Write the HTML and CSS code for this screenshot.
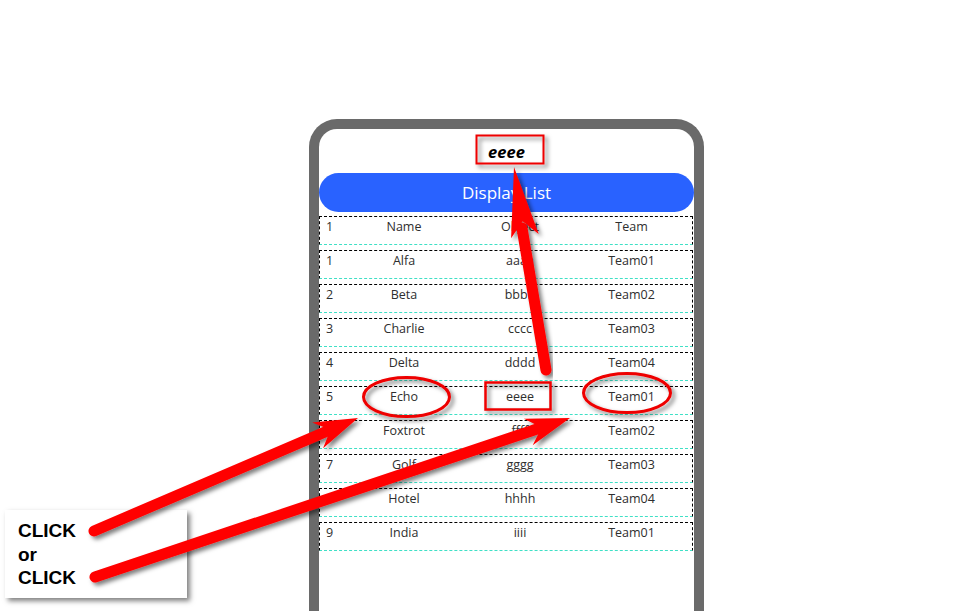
FILE: index.html
```html
<!DOCTYPE html>
<html>
<head>
<meta charset="utf-8">
<link rel="stylesheet" href="styles.css">
</head>
<body>
<div class="phone">
  <div class="title">eeee</div>
  <div class="btn">Display List</div>
  <div class="list">
    <div class="row"><span class="num">1</span><span>Name</span><span>Object</span><span>Team</span></div>
    <div class="row"><span class="num">1</span><span>Alfa</span><span>aaaa</span><span>Team01</span></div>
    <div class="row"><span class="num">2</span><span>Beta</span><span>bbbb</span><span>Team02</span></div>
    <div class="row"><span class="num">3</span><span>Charlie</span><span>cccc</span><span>Team03</span></div>
    <div class="row"><span class="num">4</span><span>Delta</span><span>dddd</span><span>Team04</span></div>
    <div class="row"><span class="num">5</span><span>Echo</span><span>eeee</span><span>Team01</span></div>
    <div class="row"><span class="num">6</span><span>Foxtrot</span><span>ffff</span><span>Team02</span></div>
    <div class="row"><span class="num">7</span><span>Golf</span><span>gggg</span><span>Team03</span></div>
    <div class="row"><span class="num">8</span><span>Hotel</span><span>hhhh</span><span>Team04</span></div>
    <div class="row"><span class="num">9</span><span>India</span><span>iiii</span><span>Team01</span></div>
  </div>
</div>

<div class="callout">CLICK<br>or<br>CLICK</div>

<svg class="notes" width="967" height="611" viewBox="0 0 967 611" xmlns="http://www.w3.org/2000/svg">
  <defs>
    <filter id="sh" x="-20%" y="-20%" width="140%" height="140%">
      <feDropShadow dx="3" dy="3" stdDeviation="2.2" flood-color="#000" flood-opacity="0.5"/>
    </filter>
  </defs>
  <g filter="url(#sh)" fill="none" stroke="#ee0000">
    <rect x="476.5" y="135.5" width="67" height="28" stroke-width="2"/>
    <ellipse cx="406.5" cy="397" rx="43" ry="19.5" stroke-width="3"/>
    <rect x="485.5" y="382.5" width="65" height="27" stroke-width="2.5"/>
    <ellipse cx="627" cy="393" rx="43.5" ry="19.5" stroke-width="3"/>
  </g>
  <g filter="url(#sh)">
    <line x1="546" y1="370" x2="522" y2="228" stroke="#ff0000" stroke-width="11" stroke-linecap="round"/>
    <polygon points="514,167 538.7,233.9 522.6,221.3 511.1,238.3" fill="#ff0000"/>
  </g>
  <g filter="url(#sh)">
    <line x1="94" y1="531" x2="332" y2="429" stroke="#ff0000" stroke-width="11" stroke-linecap="round"/>
    <polygon points="358,418 323.1,448.2 330.4,429.8 312.1,422.4" fill="#ff0000"/>
  </g>
  <g filter="url(#sh)">
    <line x1="95" y1="577" x2="543" y2="427" stroke="#ff0000" stroke-width="11" stroke-linecap="round"/>
    <polygon points="570,418 532.7,445.3 541.6,427.5 523.9,418.7" fill="#ff0000"/>
  </g>
</svg>
</body>
</html>
```

FILE: styles.css
```css
html, body {
  margin: 0;
  padding: 0;
  background: #ffffff;
  overflow: hidden;
  height: 611px;
}

body {
  position: relative;
  font-family: "Open Sans", "Noto Sans", sans-serif;
}

.phone {
  margin: 119px 0 0 309px;
  width: 375px;
  height: 482px;
  border: 10px solid #6a6a6a;
  border-bottom: 0;
  border-radius: 28px 28px 0 0;
  background: #ffffff;
}

.title {
  height: 44px;
  display: flex;
  align-items: center;
  justify-content: center;
  font-size: 16.5px;
  font-weight: 700;
  font-style: italic;
  color: #000000;
}

.btn {
  height: 39px;
  border-radius: 20px;
  background: #2962ff;
  color: #ffffff;
  font-size: 17px;
  display: flex;
  align-items: center;
  justify-content: center;
}

.list {
  margin-top: 4px;
  width: 374px;
}

.row {
  display: grid;
  grid-template-columns: 28px 112px 120px 103px 1fr;
  height: 27px;
  border: 1px dashed #000000;
  border-bottom: 1px dashed #3fe0c6;
  margin-bottom: 5px;
  font-size: 12.5px;
  line-height: 18px;
  color: #2e2e2e;
}

.row span {
  text-align: center;
  padding-top: 1px;
}

.row .num {
  text-align: left;
  padding-left: 6px;
}

.callout {
  position: absolute;
  left: 5px;
  top: 510px;
  width: 169px;
  height: 79px;
  padding: 9px 0 0 13px;
  background: #ffffff;
  box-shadow: 3px 3px 5px rgba(0, 0, 0, 0.5);
  font-family: "Liberation Sans", Arial, sans-serif;
  font-weight: 700;
  font-size: 19px;
  line-height: 23.5px;
  color: #000000;
}

.notes {
  position: absolute;
  left: 0;
  top: 0;
  pointer-events: none;
}
```
